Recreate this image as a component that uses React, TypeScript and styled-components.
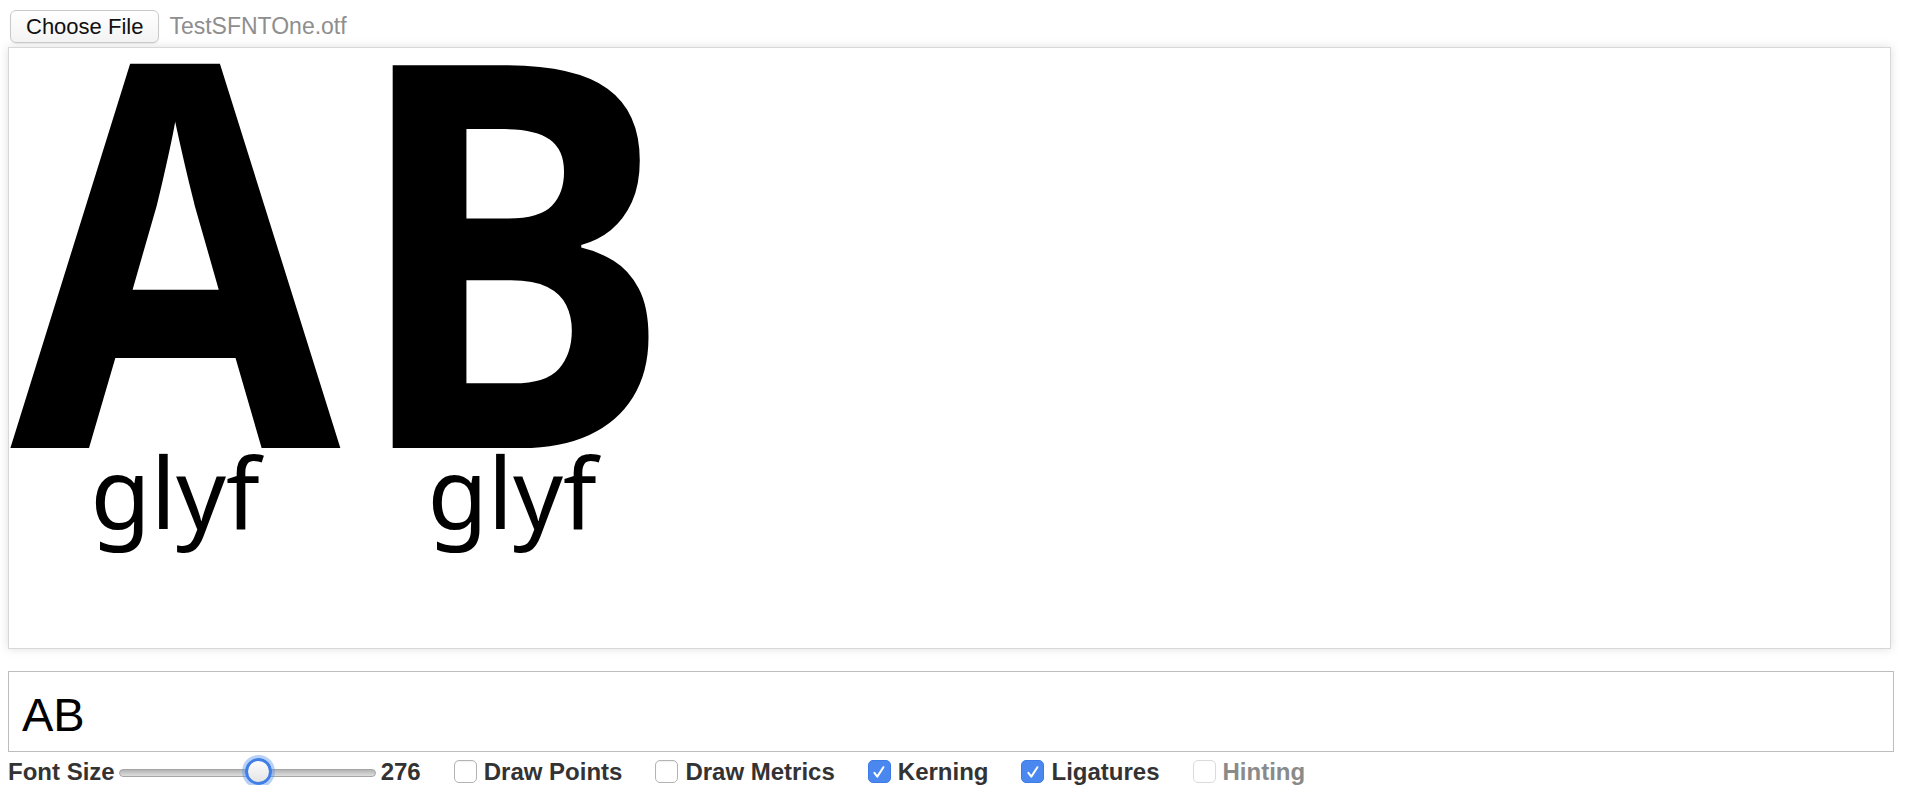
import React from "react";
import styled, { createGlobalStyle } from "styled-components";

const GlobalStyle = createGlobalStyle`
  html, body { margin: 0; padding: 0; background: #ffffff; }
  body { font-family: "Liberation Sans", Arial, sans-serif; }
`;

const Page = styled.div`
  width: 1910px;
  box-sizing: border-box;
  padding: 10px 0 0 8px;
`;

const FileRow = styled.div`
  display: flex;
  align-items: center;
  gap: 10px;
  height: 33px;
  margin-left: 2px;
`;

const FileButton = styled.button`
  height: 33px;
  box-sizing: border-box;
  padding: 0 15px;
  font-family: "Liberation Sans", Arial, sans-serif;
  font-size: 22px;
  color: #111;
  background: linear-gradient(#ffffff, #f3f3f3);
  border: 1px solid #c9c9c9;
  border-radius: 6px;
  box-shadow: 0 1px 1px rgba(0, 0, 0, 0.08);
`;

const FileName = styled.span`
  font-size: 23px;
  color: #8e8e8e;
`;

const CanvasBox = styled.div`
  margin-top: 4px;
  width: 1883px;
  height: 602px;
  box-sizing: border-box;
  border: 1px solid #d8d8d8;
  box-shadow: 0 0 9px rgba(0, 0, 0, 0.13);
  display: flex;
  align-items: flex-start;
  padding-left: 1px;
  overflow: hidden;
`;

const GlyphCell = styled.div<{ $w: number }>`
  flex: none;
  width: ${(p) => p.$w}px;
  display: flex;
  flex-direction: column;
  align-items: center;
`;

const BigGlyph = styled.div<{ $sx: number }>`
  font-family: "Noto Sans", "DejaVu Sans", sans-serif;
  font-weight: 700;
  font-size: 536px;
  line-height: 384px;
  height: 384px;
  white-space: nowrap;
  color: #000;
  transform: scaleX(${(p) => p.$sx});
`;

const GlyphLabel = styled.div`
  font-family: "Noto Sans", "DejaVu Sans", sans-serif;
  font-size: 98px;
  line-height: 119px;
  color: #000;
`;

const TextInput = styled.input`
  display: block;
  margin-top: 22px;
  width: 1886px;
  height: 81px;
  box-sizing: border-box;
  border: 1px solid #bdbdbd;
  padding: 6px 0 0 13px;
  font-family: "Liberation Sans", Arial, sans-serif;
  font-size: 47px;
  color: #000;
  background: #fff;
  outline: none;
`;

const Controls = styled.div`
  display: flex;
  align-items: center;
  height: 27px;
  margin-top: 6px;
`;

const BoldLabel = styled.span<{ $disabled?: boolean }>`
  font-weight: 700;
  font-size: 24px;
  line-height: 27px;
  white-space: nowrap;
  color: ${(p) => (p.$disabled ? "#8a8a8a" : "#333333")};
`;

const Slider = styled.div`
  position: relative;
  width: 257px;
  height: 27px;
  margin-left: 4px;
  display: flex;
  align-items: center;
`;

const Track = styled.div`
  width: 100%;
  height: 8px;
  margin-top: 3px;
  box-sizing: border-box;
  border: 1px solid #a5a5a5;
  border-radius: 4px;
  background: linear-gradient(#b4b4b4, #dedede);
`;

const Thumb = styled.div`
  position: absolute;
  top: 0;
  width: 27px;
  height: 27px;
  box-sizing: border-box;
  border-radius: 50%;
  border: 3px solid #3f7fe6;
  background: linear-gradient(#fdfdfd, #e4e4e4);
  box-shadow: 0 0 0 3px rgba(96, 150, 240, 0.45);
`;

const Value = styled(BoldLabel)`
  margin-left: 5px;
`;

const CheckItem = styled.label`
  display: flex;
  align-items: center;
  gap: 7px;
  margin-left: 33px;
`;

const Box = styled.span<{ $checked?: boolean; $disabled?: boolean }>`
  flex: none;
  width: 23px;
  height: 23px;
  box-sizing: border-box;
  border-radius: 5px;
  display: flex;
  align-items: center;
  justify-content: center;
  background: ${(p) => (p.$checked ? "#4a88f0" : "#ffffff")};
  border: 1px solid
    ${(p) => (p.$checked ? "#3d7ce6" : p.$disabled ? "#dadada" : "#b3b3b3")};
  box-shadow: ${(p) =>
    p.$checked || p.$disabled ? "none" : "inset 0 1px 1px rgba(0,0,0,0.06)"};
`;

type CheckProps = { label: string; checked?: boolean; disabled?: boolean };

const Check: React.FC<CheckProps> = ({ label, checked, disabled }) => (
  <CheckItem>
    <Box $checked={checked} $disabled={disabled}>
      {checked && (
        <svg width="16" height="16" viewBox="0 0 16 16">
          <path
            d="M3.4 8.8 L6.3 12.6 L12.4 3.2"
            fill="none"
            stroke="#ffffff"
            strokeWidth="2"
            strokeLinecap="round"
            strokeLinejoin="round"
          />
        </svg>
      )}
    </Box>
    <BoldLabel $disabled={disabled}>{label}</BoldLabel>
  </CheckItem>
);

const glyphs = [
  { ch: "A", w: 330, sx: 0.89 },
  { ch: "B", w: 344, sx: 0.9 },
];

export default function App() {
  const fontSize = 276;
  const pct = 140 / 257;
  return (
    <>
      <GlobalStyle />
      <Page>
        <FileRow>
          <FileButton>Choose File</FileButton>
          <FileName>TestSFNTOne.otf</FileName>
        </FileRow>
        <CanvasBox>
          {glyphs.map((g) => (
            <GlyphCell key={g.ch} $w={g.w}>
              <BigGlyph $sx={g.sx}>{g.ch}</BigGlyph>
              <GlyphLabel>glyf</GlyphLabel>
            </GlyphCell>
          ))}
        </CanvasBox>
        <TextInput defaultValue="AB" readOnly />
        <Controls>
          <BoldLabel>Font Size</BoldLabel>
          <Slider>
            <Track />
            <Thumb style={{ left: `calc(${pct * 100}% - 13.5px)` }} />
          </Slider>
          <Value>{fontSize}</Value>
          <Check label="Draw Points" />
          <Check label="Draw Metrics" />
          <Check label="Kerning" checked />
          <Check label="Ligatures" checked />
          <Check label="Hinting" disabled />
        </Controls>
      </Page>
    </>
  );
}
